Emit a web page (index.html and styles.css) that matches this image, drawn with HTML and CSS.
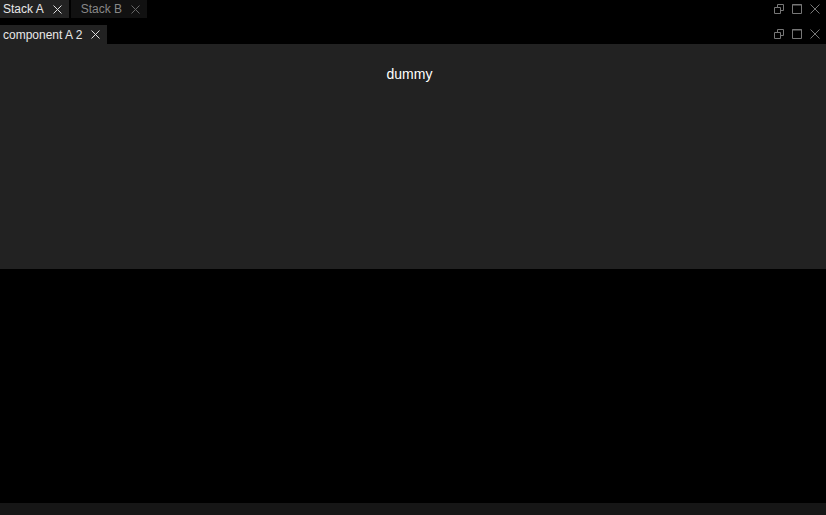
FILE: index.html
```html
<!DOCTYPE html>
<html lang="en">

<head>
    <meta charset="UTF-8">
    <meta name="viewport" content="width=device-width, initial-scale=1.0">
    <title>Layout</title>
    <link rel="stylesheet" href="styles.css">
</head>

<body>
    <div class="Layout">
        <div class="Header Header--outer">
            <div class="Tabs">
                <div class="Tab is-active">
                    <span class="Tab-title">Stack A</span>
                    <svg class="Tab-close" viewBox="0 0 9 9"><path d="M0.5 0.5L8.5 8.5M8.5 0.5L0.5 8.5" /></svg>
                </div>
                <div class="Tab">
                    <span class="Tab-title">Stack B</span>
                    <svg class="Tab-close" viewBox="0 0 9 9"><path d="M0.5 0.5L8.5 8.5M8.5 0.5L0.5 8.5" /></svg>
                </div>
            </div>
            <div class="Controls">
                <svg class="Control" viewBox="0 0 10 10"><path d="M0.5 3.5H6.5V9.5H0.5ZM3.5 3.5V0.5H9.5V6.5H6.5" /></svg>
                <svg class="Control" viewBox="0 0 10 10"><path d="M0.5 0.5H9.5V9.5H0.5Z" /><path d="M0 1H10" /></svg>
                <svg class="Control" viewBox="0 0 10 10"><path d="M0.5 0.5L9.5 9.5M9.5 0.5L0.5 9.5" /></svg>
            </div>
        </div>

        <div class="Header Header--inner">
            <div class="Tabs">
                <div class="Tab is-active">
                    <span class="Tab-title">component A 2</span>
                    <svg class="Tab-close" viewBox="0 0 9 9"><path d="M0.5 0.5L8.5 8.5M8.5 0.5L0.5 8.5" /></svg>
                </div>
            </div>
            <div class="Controls">
                <svg class="Control" viewBox="0 0 10 10"><path d="M0.5 3.5H6.5V9.5H0.5ZM3.5 3.5V0.5H9.5V6.5H6.5" /></svg>
                <svg class="Control" viewBox="0 0 10 10"><path d="M0.5 0.5H9.5V9.5H0.5Z" /><path d="M0 1H10" /></svg>
                <svg class="Control" viewBox="0 0 10 10"><path d="M0.5 0.5L9.5 9.5M9.5 0.5L0.5 9.5" /></svg>
            </div>
        </div>

        <div class="Pane">
            <p class="Pane-text">dummy</p>
        </div>

        <div class="Spacer"></div>
        <div class="Footer"></div>
    </div>
</body>

</html>
```

FILE: styles.css
```css
html,
body {
    height: 100%;
    margin: 0;
    background-color: #000000;
}

.Layout {
    display: flex;
    flex-direction: column;
    height: 515px;
    font-family: "Liberation Sans", Arial, sans-serif;
}

.Header {
    display: flex;
    justify-content: space-between;
}

.Header--outer {
    height: 18px;
    margin-bottom: 7px;
}

.Header--inner {
    height: 19px;
}

.Tabs {
    display: flex;
    gap: 2px;
}

.Tab {
    display: flex;
    align-items: center;
    gap: 9px;
    padding: 0 7px 0 3px;
    background-color: #111111;
    color: #888888;
    font-size: 12px;
}

.Tab + .Tab {
    padding-left: 10px;
}

.Tab.is-active {
    background-color: #222222;
    color: #e8e8e8;
}

.Tab-close {
    width: 9px;
    height: 9px;
    fill: none;
    stroke: #666666;
    stroke-width: 1;
}

.Tab.is-active .Tab-close {
    stroke: #dddddd;
}

.Controls {
    display: flex;
    align-items: flex-start;
    gap: 8px;
    padding: 4px 6px 0 0;
}

.Control {
    width: 10px;
    height: 10px;
    fill: none;
    stroke: #777777;
    stroke-width: 1;
}

.Pane {
    height: 225px;
    background-color: #222222;
    box-sizing: border-box;
    padding-top: 22px;
}

.Pane-text {
    margin: 0;
    padding-right: 7px;
    color: #ffffff;
    font-size: 14px;
    line-height: 16px;
    text-align: center;
}

.Spacer {
    flex: 1;
}

.Footer {
    height: 12px;
    background-color: #161616;
}
```
